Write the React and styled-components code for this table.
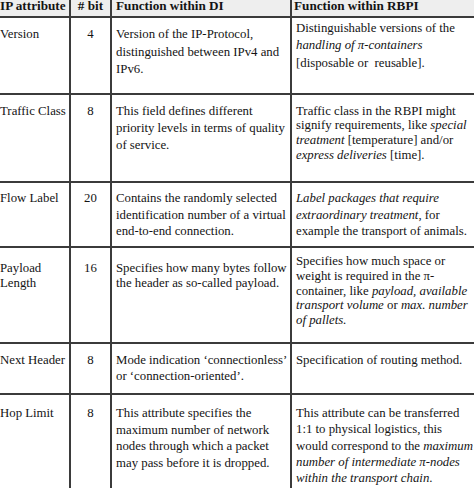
import React from "react";
import styled, { createGlobalStyle } from "styled-components";

const GlobalStyle = createGlobalStyle`
  html, body {
    margin: 0;
    padding: 0;
    background: #fff;
    overflow: hidden;
  }
`;

const Frame = styled.div`
  width: 474px;
  height: 488px;
  overflow: hidden;
  background: #fff;
`;

const Table = styled.div`
  display: grid;
  grid-template-columns: 75px 41px 180px 190px;
  grid-template-rows: ${(p) => p.$rows};
  margin: -6px 0 0 -4px;
  font-family: "Liberation Serif", "Times New Roman", serif;
  font-size: 12.8px;
  color: #141414;
`;

const HeadCell = styled.div`
  box-sizing: border-box;
  padding: 4px 4px 0 ${(p) => (p.$last ? "2px" : "4px")};
  line-height: 16px;
  font-size: 13.2px;
  font-weight: bold;
  white-space: nowrap;
  text-align: ${(p) => (p.$center ? "center" : "left")};
  background: #eeeeee;
  border-right: 2px solid #3b3b3b;
  border-bottom: 2px solid #3b3b3b;
`;

const Cell = styled.div`
  box-sizing: border-box;
  padding: ${(p) => p.$pt}px 4px 0 4px;
  line-height: ${(p) => p.$lh}px;
  text-align: ${(p) => (p.$center ? "center" : "left")};
  border-right: 2px solid #3b3b3b;
  border-bottom: 2px solid #3b3b3b;
  overflow: visible;
`;

const Line = styled.span`
  display: block;
  white-space: nowrap;
`;

const I = styled.i`
  font-style: italic;
`;

const rows = [
  {
    h: 77, pt: 8.25, lh: 17.5, pt4: 1.55, lh4: 17.5,
    name: ["Version"], bits: "4",
    di: ["Version of the IP-Protocol,", "distinguished between IPv4 and", "IPv6."],
    rbpi: [
      "Distinguishable versions of the",
      <I>handling of π-containers</I>,
      "[disposable or \u00a0reusable].",
    ],
  },
  {
    h: 88, pt: 7.5, lh: 17, pt4: 8.65, lh4: 14.7,
    name: ["Traffic Class"], bits: "8",
    di: ["This field defines different", "priority levels in terms of quality", "of service."],
    rbpi: [
      "Traffic class in the RBPI might",
      <>signify requirements, like <I>special</I></>,
      <><I>treatment</I> [temperature] and/or</>,
      <><I>express deliveries</I> [time].</>,
    ],
  },
  {
    h: 65, pt: 6.95, lh: 16.7, pt4: 6.95, lh4: 16.7,
    name: ["Flow Label"], bits: "20",
    di: ["Contains the randomly selected", "identification number of a virtual", "end-to-end connection."],
    rbpi: [
      <I>Label packages that require</I>,
      <><I>extraordinary treatment</I>, for</>,
      "example the transport of animals.",
    ],
  },
  {
    h: 96, pt: 12.8, lh: 15, pt4: 6.4, lh4: 14.6,
    name: ["Payload", "Length"], bits: "16",
    di: ["Specifies how many bytes follow", "the header as so-called payload."],
    rbpi: [
      "Specifies how much space or",
      "weight is required in the π-",
      <>container, like <I>payload, available</I></>,
      <><I>transport volume</I> or <I>max. number</I></>,
      <I>of pallets.</I>,
    ],
  },
  {
    h: 51, pt: 7.65, lh: 16.7, pt4: 7.65, lh4: 16.7,
    name: ["Next Header"], bits: "8",
    di: ["Mode indication \u2018connectionless\u2019", "or \u2018connection-oriented\u2019."],
    rbpi: ["Specification of routing method."],
  },
  {
    h: 120, pt: 10, lh: 16.5, pt4: 10, lh4: 16.3,
    name: ["Hop Limit"], bits: "8",
    di: ["This attribute specifies the", "maximum number of network", "nodes through which a packet", "may pass before it is dropped."],
    rbpi: [
      "This attribute can be transferred",
      "1:1 to physical logistics, this",
      <>would correspond to the <I>maximum</I></>,
      <I>number of intermediate π-nodes</I>,
      <><I>within the transport chain</I>.</>,
    ],
  },
];

const Lines = ({ items }) => items.map((t, i) => <Line key={i}>{t}</Line>);

export default function App() {
  const template = ["24px", ...rows.map((r) => `${r.h}px`)].join(" ");
  return (
    <Frame>
      <GlobalStyle />
      <Table $rows={template}>
        <HeadCell>IP attribute</HeadCell>
        <HeadCell $center># bit</HeadCell>
        <HeadCell>Function within DI</HeadCell>
        <HeadCell $last>Function within RBPI</HeadCell>
        {rows.map((r, i) => (
          <React.Fragment key={i}>
            <Cell $pt={r.pt} $lh={r.lh}>
              <Lines items={r.name} />
            </Cell>
            <Cell $pt={r.pt} $lh={r.lh} $center>
              {r.bits}
            </Cell>
            <Cell $pt={r.pt} $lh={r.lh}>
              <Lines items={r.di} />
            </Cell>
            <Cell $pt={r.pt4} $lh={r.lh4}>
              <Lines items={r.rbpi} />
            </Cell>
          </React.Fragment>
        ))}
      </Table>
    </Frame>
  );
}
